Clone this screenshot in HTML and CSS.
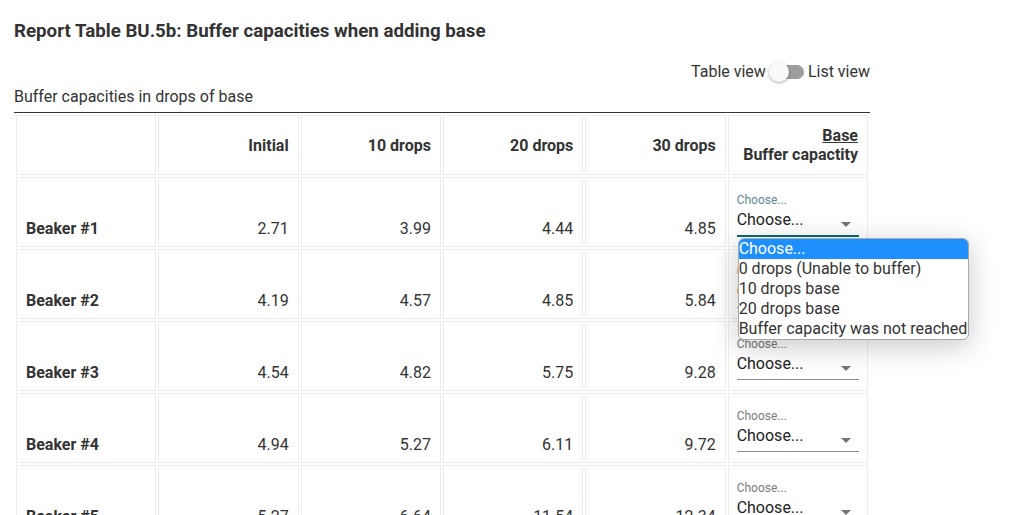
FILE: index.html
```html
<!DOCTYPE html>
<html>
<head>
<meta charset="utf-8">
<link rel="stylesheet" href="styles.css">
</head>
<body>
<div class="page">
  <h2 class="title">Report Table BU.5b: Buffer capacities when adding base</h2>
  <div class="view-toggle">
    <span>Table view</span>
    <span class="switch"><span class="track"></span><span class="knob"></span></span>
    <span>List view</span>
  </div>
  <div class="caption">Buffer capacities in drops of base</div>
  <table class="report">
    <thead>
      <tr>
        <th></th>
        <th>Initial</th>
        <th>10 drops</th>
        <th>20 drops</th>
        <th>30 drops</th>
        <th><u>Base</u><br>Buffer capactity</th>
      </tr>
    </thead>
    <tbody>
      <tr>
        <td class="name">Beaker #1</td><td>2.71</td><td>3.99</td><td>4.44</td><td>4.85</td>
        <td class="sel">
          <div class="field focused">
            <div class="field-label">Choose...</div>
            <div class="field-box">Choose...<span class="arrow"></span></div>
            <div class="dropdown">
              <div class="opt active">Choose...</div>
              <div class="opt">0 drops (Unable to buffer)</div>
              <div class="opt">10 drops base</div>
              <div class="opt">20 drops base</div>
              <div class="opt">Buffer capacity was not reached</div>
            </div>
          </div>
        </td>
      </tr>
      <tr>
        <td class="name">Beaker #2</td><td>4.19</td><td>4.57</td><td>4.85</td><td>5.84</td>
        <td class="sel"><div class="field"><div class="field-label">Choose...</div><div class="field-box">Choose...<span class="arrow"></span></div></div></td>
      </tr>
      <tr>
        <td class="name">Beaker #3</td><td>4.54</td><td>4.82</td><td>5.75</td><td>9.28</td>
        <td class="sel"><div class="field"><div class="field-label">Choose...</div><div class="field-box">Choose...<span class="arrow"></span></div></div></td>
      </tr>
      <tr>
        <td class="name">Beaker #4</td><td>4.94</td><td>5.27</td><td>6.11</td><td>9.72</td>
        <td class="sel"><div class="field"><div class="field-label">Choose...</div><div class="field-box">Choose...<span class="arrow"></span></div></div></td>
      </tr>
      <tr>
        <td class="name">Beaker #5</td><td>5.27</td><td>6.64</td><td>11.54</td><td>12.34</td>
        <td class="sel"><div class="field"><div class="field-label">Choose...</div><div class="field-box">Choose...<span class="arrow"></span></div></div></td>
      </tr>
    </tbody>
  </table>
</div>
</body>
</html>
```
FILE: styles.css
```css
html { overflow: hidden; }
body {
  margin: 0;
  font-family: Roboto, "Liberation Sans", sans-serif;
  color: #333;
  background: #fff;
}
.page {
  width: 856px;
  padding: 19px 0 0 14px;
}
.title {
  margin: 0;
  font-size: 18.72px;
  line-height: 24px;
  font-weight: 700;
  color: #333;
}
.view-toggle {
  margin-top: 17px;
  display: flex;
  justify-content: flex-end;
  align-items: center;
  gap: 3px;
  font-size: 16px;
  line-height: 24px;
}
.switch {
  position: relative;
  width: 36px;
  height: 20px;
  display: inline-block;
}
.track {
  position: absolute;
  left: 4px;
  top: 3px;
  width: 31px;
  height: 14px;
  border-radius: 7px;
  background: #9e9e9e;
}
.knob {
  position: absolute;
  left: 0;
  top: 0;
  width: 20px;
  height: 20px;
  border-radius: 50%;
  background: #fafafa;
  box-shadow: 0 1px 3px rgba(0,0,0,0.35);
}
.caption {
  margin-top: 3px;
  font-size: 16px;
  line-height: 20px;
  padding-bottom: 5px;
  border-bottom: 1px solid #333;
}
.report {
  width: 856px;
  table-layout: fixed;
  border-collapse: separate;
  border-spacing: 2px;
  font-size: 16px;
}
.report th, .report td {
  border: 1px solid #eeece8;
  padding: 10px 9px 7px 9px;
  text-align: right;
  line-height: 20px;
}
.report thead tr { height: 60px; }
.report th {
  padding: 10px 9px;
  font-weight: 700;
  line-height: 19px;
  vertical-align: middle;
}
.report tbody tr { height: 70px; }
.report td {
  vertical-align: bottom;
}
.report td.name {
  text-align: left;
  font-weight: 700;
}
.report td.sel {
  text-align: left;
  padding: 10px 8px 9px 8px;
}
.field {
  position: relative;
}
.field-label {
  font-size: 12px;
  line-height: 16px;
  color: #7b7b7b;
}
.field.focused .field-label { color: #5e8896; }
.field-box {
  position: relative;
  font-size: 16px;
  line-height: 20px;
  padding-top: 2px;
  padding-bottom: 5px;
  border-bottom: 1px solid #8a8a8a;
  margin-bottom: 1px;
  color: #222;
}
.field.focused .field-box {
  border-bottom: 2px solid #0a6b78;
  margin-bottom: 0;
}
.arrow {
  position: absolute;
  right: 8px;
  top: 14px;
  width: 0;
  height: 0;
  border-left: 5px solid transparent;
  border-right: 5px solid transparent;
  border-top: 5px solid #757575;
}
.dropdown {
  position: absolute;
  left: 1px;
  top: calc(100% + 1px);
  width: 229px;
  background: #fff;
  border: 1px solid #a8a8a8;
  border-radius: 6px;
  overflow: hidden;
  box-shadow: 0 6px 28px rgba(0,0,0,0.22);
  z-index: 5;
}
.opt {
  font-size: 16px;
  line-height: 20px;
  color: #333;
  white-space: nowrap;
}
.opt.active {
  background: #1e8fff;
  color: #fff;
}
```
